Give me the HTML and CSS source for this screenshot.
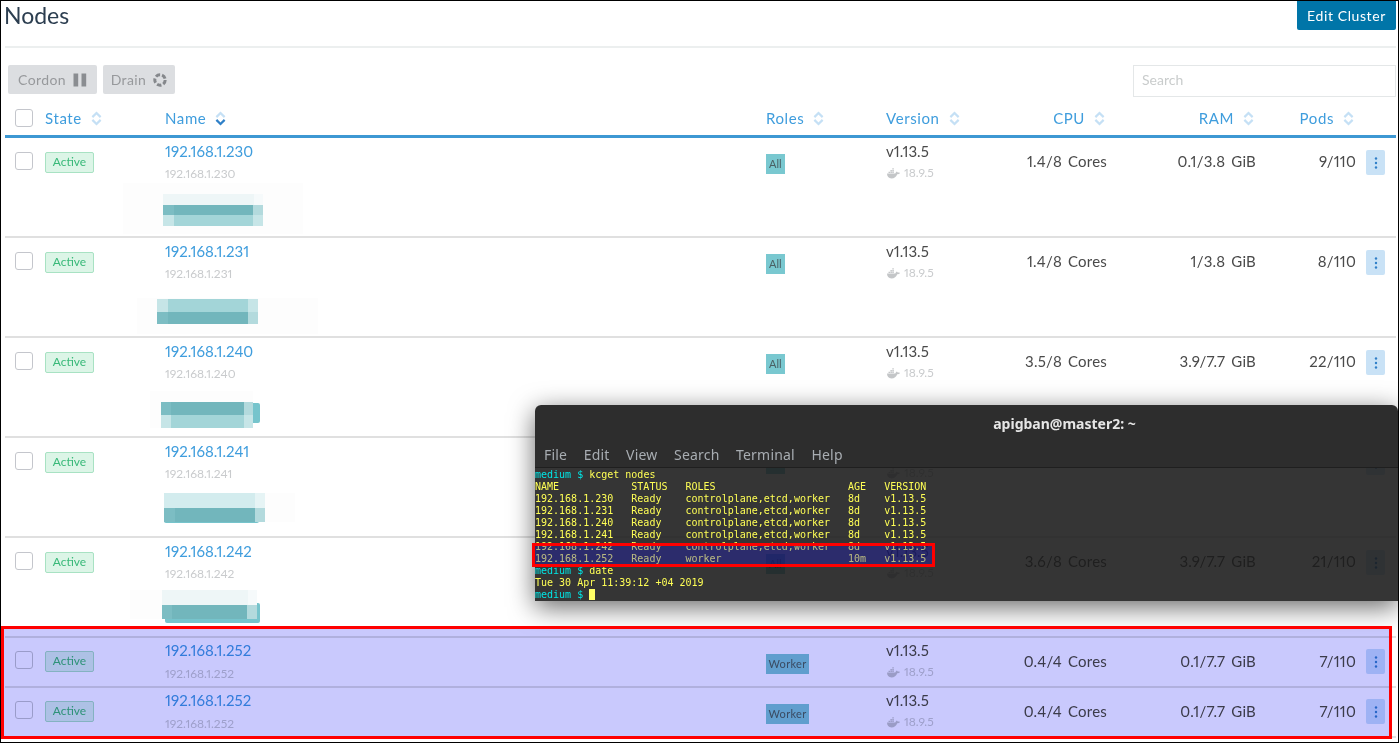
FILE: index.html
```html
<!DOCTYPE html>
<html lang="en">
<head>
<meta charset="utf-8">
<title>Nodes</title>
<link rel="stylesheet" href="styles.css">
</head>
<body>
<svg class="defs" width="0" height="0" aria-hidden="true">
  <symbol id="sort" viewBox="0 0 12 17">
    <path class="up" d="M1.500 7 6 2.500 10.500 7" fill="none" stroke-width="2.400"/>
    <path class="down" d="M1.500 10 6 14.500 10.500 10" fill="none" stroke-width="2.400"/>
  </symbol>
  <symbol id="whale" viewBox="0 0 14 11">
    <path d="M1 5.600h8.300c.3-1.100 1-1.900 1.700-2.200.2.600.5 1 1 1.200.6-.2 1.300-.1 1.900.3-.6 1-1.500 1.400-2.700 1.400C10.400 9 8.300 10.500 5.500 10.500 2.600 10.500 1 8.500 1 5.600z"/>
    <path d="M2.500 3.800h1.500v1.300H2.500zM4.400 3.800h1.500v1.300H4.400zM6.300 3.800h1.500v1.300H6.300zM4.400 2h1.500v1.400H4.400zM6.300 2h1.500v1.400H6.300zM6.300.3h1.500v1.300H6.300z"/>
  </symbol>
  <symbol id="kebab" viewBox="0 0 4 14">
    <circle cx="2" cy="2.500" r="1.200"/><circle cx="2" cy="7" r="1.200"/><circle cx="2" cy="11.500" r="1.200"/>
  </symbol>
</svg>

<div class="page">
  <header class="header">
    <h1 class="title">Nodes</h1>
    <button class="edit">Edit Cluster</button>
  </header>

  <div class="toolbar">
    <button class="action cordon">Cordon
      <svg class="ic" width="14" height="14" viewBox="0 0 14 14"><rect x="0.500" y="0.500" width="4.700" height="13"/><rect x="8.500" y="0.500" width="4.700" height="13"/></svg>
    </button>
    <button class="action drain">Drain
      <svg class="ic" width="14" height="14" viewBox="0 0 14 14"><circle class="spin" cx="7" cy="7" r="5.200"/></svg>
    </button>
    <div class="search">Search</div>
  </div>

  <div class="grid head">
    <span class="check"></span>
    <span class="th">State<svg class="sort"><use href="#sort"/></svg></span>
    <span class="th">Name<svg class="sort active"><use href="#sort"/></svg></span>
    <span class="th">Roles<svg class="sort"><use href="#sort"/></svg></span>
    <span class="th">Version<svg class="sort"><use href="#sort"/></svg></span>
    <span class="th right">CPU<svg class="sort"><use href="#sort"/></svg></span>
    <span class="th right">RAM<svg class="sort"><use href="#sort"/></svg></span>
    <span class="th right">Pods<svg class="sort"><use href="#sort"/></svg></span>
  </div>

  <div class="grid row">
    <span class="check"></span><span class="badge">Active</span>
    <div class="name"><a class="link">192.168.1.230</a><small class="sub">192.168.1.230</small></div>
    <span class="role">All</span>
    <div class="ver"><span class="v">v1.13.5</span><small class="sub"><svg class="whale"><use href="#whale"/></svg>18.9.5</small></div>
    <span class="num">1.4/8 Cores</span><span class="num">0.1/3.8 GiB</span><span class="num">9/110</span>
    <span class="more"><svg class="kebab"><use href="#kebab"/></svg></span>
    <div class="redact r1"><i class="bar b-pale"></i><i class="bar b-dark"></i><i class="bar b-mid"></i></div>
  </div>

  <div class="grid row">
    <span class="check"></span><span class="badge">Active</span>
    <div class="name"><a class="link">192.168.1.231</a><small class="sub">192.168.1.231</small></div>
    <span class="role">All</span>
    <div class="ver"><span class="v">v1.13.5</span><small class="sub"><svg class="whale"><use href="#whale"/></svg>18.9.5</small></div>
    <span class="num">1.4/8 Cores</span><span class="num">1/3.8 GiB</span><span class="num">8/110</span>
    <span class="more"><svg class="kebab"><use href="#kebab"/></svg></span>
    <div class="redact r2"><i class="bar b-mid"></i><i class="bar b-dark"></i></div>
  </div>

  <div class="grid row">
    <span class="check"></span><span class="badge">Active</span>
    <div class="name"><a class="link">192.168.1.240</a><small class="sub">192.168.1.240</small></div>
    <span class="role">All</span>
    <div class="ver"><span class="v">v1.13.5</span><small class="sub"><svg class="whale"><use href="#whale"/></svg>18.9.5</small></div>
    <span class="num">3.5/8 Cores</span><span class="num">3.9/7.7 GiB</span><span class="num">22/110</span>
    <span class="more"><svg class="kebab"><use href="#kebab"/></svg></span>
    <div class="peek p3"></div>
    <div class="redact r3"><i class="bar b-dark"></i><i class="bar b-mid"></i></div>
  </div>

  <div class="grid row">
    <span class="check"></span><span class="badge">Active</span>
    <div class="name"><a class="link">192.168.1.241</a><small class="sub">192.168.1.241</small></div>
    <span class="role">All</span>
    <div class="ver"><span class="v">v1.13.5</span><small class="sub"><svg class="whale"><use href="#whale"/></svg>18.9.5</small></div>
    <span class="num">3.6/8 Cores</span><span class="num">3.9/7.7 GiB</span><span class="num">21/110</span>
    <span class="more"><svg class="kebab"><use href="#kebab"/></svg></span>
    <div class="peek p4"></div>
    <div class="redact r4"><i class="bar b-light"></i><i class="bar b-dark"></i></div>
  </div>

  <div class="grid row">
    <span class="check"></span><span class="badge">Active</span>
    <div class="name"><a class="link">192.168.1.242</a><small class="sub">192.168.1.242</small></div>
    <span class="role">All</span>
    <div class="ver"><span class="v">v1.13.5</span><small class="sub"><svg class="whale"><use href="#whale"/></svg>18.9.5</small></div>
    <span class="num">3.6/8 Cores</span><span class="num">3.9/7.7 GiB</span><span class="num">21/110</span>
    <span class="more"><svg class="kebab"><use href="#kebab"/></svg></span>
    <div class="peek p5"></div>
    <div class="redact r5"><i class="bar b-pale"></i><i class="bar b-dark"></i></div>
  </div>

  <div class="grid row short">
    <span class="check"></span><span class="badge">Active</span>
    <div class="name"><a class="link">192.168.1.252</a><small class="sub">192.168.1.252</small></div>
    <span class="role wide">Worker</span>
    <div class="ver"><span class="v">v1.13.5</span><small class="sub"><svg class="whale"><use href="#whale"/></svg>18.9.5</small></div>
    <span class="num">0.4/4 Cores</span><span class="num">0.1/7.7 GiB</span><span class="num">7/110</span>
    <span class="more"><svg class="kebab"><use href="#kebab"/></svg></span>
  </div>

  <div class="grid row short">
    <span class="check"></span><span class="badge">Active</span>
    <div class="name"><a class="link">192.168.1.252</a><small class="sub">192.168.1.252</small></div>
    <span class="role wide">Worker</span>
    <div class="ver"><span class="v">v1.13.5</span><small class="sub"><svg class="whale"><use href="#whale"/></svg>18.9.5</small></div>
    <span class="num">0.4/4 Cores</span><span class="num">0.1/7.7 GiB</span><span class="num">7/110</span>
    <span class="more"><svg class="kebab"><use href="#kebab"/></svg></span>
  </div>

  <section class="terminal">
    <div class="term-title">apigban@master2: ~</div>
    <nav class="term-menu"><span>File</span><span>Edit</span><span>View</span><span>Search</span><span>Terminal</span><span>Help</span></nav>
    <pre class="term-body"><span class="c">medium $</span> kcget nodes
NAME            STATUS   ROLES                      AGE   VERSION
192.168.1.230   Ready    controlplane,etcd,worker   8d    v1.13.5
192.168.1.231   Ready    controlplane,etcd,worker   8d    v1.13.5
192.168.1.240   Ready    controlplane,etcd,worker   8d    v1.13.5
192.168.1.241   Ready    controlplane,etcd,worker   8d    v1.13.5
192.168.1.242   Ready    controlplane,etcd,worker   8d    v1.13.5
192.168.1.252   Ready    worker                     10m   v1.13.5
<span class="c">medium $</span> date
Tue 30 Apr 11:39:12 +04 2019
<span class="c">medium $</span> <span class="cursor"></span></pre>
    <div class="term-box"></div>
  </section>

  <div class="highlight"></div>
  <div class="highlight-box"></div>
</div>
</body>
</html>
```
FILE: styles.css
```css
* { box-sizing: border-box; }
html, body { margin: 0; padding: 0; background: #fff; }
body { font-family: "Lato", "Noto Sans", sans-serif; color: #4a4a4a; font-variant-numeric: proportional-nums; }
.defs { position: absolute; }
#sort .up { stroke: var(--up); }
#sort .down { stroke: var(--down); }

.page {
  position: relative;
  width: 1399px;
  height: 743px;
  padding: 0 2px 0 4px;
  border: 1px solid #000;
  overflow: hidden;
  background: #fff;
}

.header {
  display: flex;
  justify-content: space-between;
  align-items: flex-start;
  height: 47px;
  border-bottom: 2px solid #ecefef;
}
.title {
  margin: 0 0 0 -1px;
  font-size: 23px;
  line-height: 28px;
  font-weight: 400;
  color: #2c3e50;
}
.edit {
  width: 99px;
  height: 29px;
  padding: 0;
  border: 0;
  border-radius: 0 0 2px 2px;
  background: #0075a8;
  color: #fff;
  font: 400 14px/29px "Lato", sans-serif;
  letter-spacing: .6px;
}

.toolbar {
  display: flex;
  align-items: flex-start;
  gap: 6px;
  height: 48px;
  padding: 17px 0 0 3px;
}
.action {
  display: flex;
  align-items: center;
  justify-content: center;
  gap: 7px;
  height: 29px;
  padding: 0;
  border: 0;
  border-radius: 2px;
  background: #dcdee1;
  color: #97999c;
  font: 400 14px "Lato", sans-serif;
  letter-spacing: .4px;
}
.cordon { width: 89px; }
.drain { width: 72px; }
.ic { fill: #8a8d91; }
.spin { fill: none; stroke: #85888c; stroke-width: 3; stroke-dasharray: 4.500 2; }
.search {
  width: 263px;
  height: 32px;
  margin-left: auto;
  padding: 0 8px;
  border: 1px solid #e4e7e8;
  background: #fff;
  color: #c9cccc;
  font-size: 14px;
  line-height: 28px;
}

.grid {
  display: grid;
  grid-template-columns: 30px 120px 601px 120px 120px 101px 149px 100px 40px;
  padding-left: 10px;
}
.head {
  height: 42px;
  align-items: center;
  padding-top: 5px;
  border-bottom: 3px solid #3d98d3;
}
.th {
  display: flex;
  align-items: center;
  gap: 9px;
  color: #3f9ddd;
  font-size: 15px;
  line-height: 20px;
  letter-spacing: .6px;
}
.th.right { justify-content: flex-end; padding-right: 2px; }
.sort { width: 11px; height: 17px; --up: #c5e0f5; --down: #c5e0f5; }
.sort.active { --down: #2f80c8; }

.check {
  display: block;
  width: 18px;
  height: 18px;
  border: 1px solid #c4c6cc;
  border-radius: 3px;
  background: #fff;
}
.row {
  position: relative;
  height: 100px;
  padding-top: 14px;
  align-items: start;
  border-bottom: 2px solid #e0e0e0;
}
.row.short { height: 50px; }
.short .check, .short .badge { margin-top: -1px; }

.badge {
  display: block;
  width: 49px;
  height: 21px;
  border: 1px solid #a8e2c3;
  border-radius: 2px;
  background: #dcf5e7;
  color: #39b979;
  font-size: 12px;
  line-height: 18px;
  text-align: center;
}
.name, .ver { margin-top: -11px; }
.short .name, .short .ver { margin-top: -12px; }
.name { display: flex; flex-direction: column; align-items: flex-start; }
.link { color: #3f9ddd; font-size: 15px; line-height: 20px; }
.sub { display: flex; align-items: center; color: #c9cbcd; font-size: 12px; line-height: 16px; margin-top: 5px; }
.short .name .sub { margin-top: 6px; }
.ver { display: flex; flex-direction: column; }
.ver .sub { margin-top: 4px; }
.v { color: #4a4a4a; font-size: 15px; line-height: 20px; }
.whale { width: 14px; height: 11px; margin-right: 4px; fill: #c4c6c8; }
.role {
  justify-self: start;
  margin-top: 2px;
  padding: 0 3px;
  height: 20px;
  background: #79c8d0;
  color: #4a5f63;
  font-size: 11px;
  line-height: 19px;
}
.role.wide { width: 43px; padding: 0; text-align: center; letter-spacing: .3px; }
.num { margin-top: -1px; text-align: right; font-size: 15px; line-height: 20px; color: #4a4a4a; letter-spacing: .2px; word-spacing: 2px; }
.more {
  display: flex;
  align-items: center;
  justify-content: center;
  justify-self: start;
  width: 19px;
  height: 25px;
  margin: -2px 0 0 10px;
  border-radius: 2px;
  background: #c9e2f6;
}
.short .more { margin-top: -3px; }
.kebab { width: 4px; height: 14px; fill: #2f7fc8; }

.redact {
  position: absolute;
  display: flex;
  flex-direction: column;
}
.redact::before {
  content: "";
  position: absolute;
  background: #fdfdfd;
}
.bar { display: block; position: relative; }
.b-pale { background: linear-gradient(90deg, #eef6f7 91%, #f6fafb 91%); }
.b-light { background: linear-gradient(90deg, #d3ecee 90%, #e6f4f5 90%); }
.b-mid { background: linear-gradient(90deg, #c6e5e7 11%, #a3d5d8 11%, #a3d5d8 90%, #c6e5e7 90%); }
.b-dark { background: linear-gradient(90deg, #7cbdc3 11%, #72b6bc 11%, #72b6bc 90%, #b3dadd 90%); }
.r1 { left: 158px; top: 56px; width: 100px; height: 32px; }
.r1 .bar { height: 33.33%; }
.r1::before { left: -40px; right: -40px; top: -11px; bottom: -8px; }
.r2 { left: 152px; top: 61px; width: 101px; height: 25px; }
.r2 .bar { height: 50%; }
.r2::before { left: -20px; right: -60px; top: -1px; bottom: -10px; }
.r3 { left: 156px; top: 64px; width: 92px; height: 26px; }
.r3 .bar { height: 50%; }
.r3::before { left: -11px; right: 0; top: -11px; bottom: 0; }
.r4 { left: 159px; top: 55px; width: 101px; height: 29px; }
.r4 .bar { height: 50%; }
.r4::before { left: 0; right: -30px; top: 0; bottom: 0; }
.r5 { left: 157px; top: 52px; width: 95px; height: 29px; }
.r5 .bar { height: 50%; }
.r5::before { left: -32px; right: 0; top: 0; bottom: 0; }
.peek { position: absolute; background: #76c4cc; border-radius: 2px; }
.p3 { left: 240px; top: 65px; width: 15px; height: 20px; }
.p4 { left: 159px; top: 76px; width: 95px; height: 9px; }
.p5 { left: 160px; top: 65px; width: 95px; height: 20px; }

.highlight, .highlight-box {
  position: absolute;
  left: 0;
  top: 625px;
  width: 1391px;
  height: 113px;
}
.highlight { background: #c9c9fd; mix-blend-mode: multiply; }
.highlight-box { border: 3px solid #f00; }

.terminal {
  position: absolute;
  left: 534px;
  top: 404px;
  right: 0;
  height: 196px;
  display: flex;
  flex-direction: column;
  border-radius: 6px 6px 0 0;
  box-shadow: 0 6px 26px rgba(0, 0, 0, .6);
  color: #ffff55;
}
.term-title {
  height: 38px;
  padding: 10px 0 0 196px;
  border-radius: 6px 6px 0 0;
  background: #2d2d2d;
  color: #e6e6e6;
  font: 700 14px/18px "Noto Sans", sans-serif;
  text-align: center;
}
.term-menu {
  display: flex;
  gap: 16.500px;
  height: 24px;
  padding: 0 9px;
  background: #2d2d2d;
  color: #a8adb2;
  font: 400 14px/24px "Noto Sans", sans-serif;
  letter-spacing: .2px;
}
.term-body {
  position: relative;
  flex: 1;
  margin: 0;
  padding-top: 1px;
  border-top: 1px solid #1f1f1f;
  background: rgba(25, 25, 25, .877);
  font: 10px/12px "DejaVu Sans Mono", monospace;
  white-space: pre;
}
.c { color: #00e5e5; }
.cursor { display: inline-block; width: 6px; height: 11px; background: #ffff66; vertical-align: -2px; }
.term-box {
  position: absolute;
  left: -3px;
  top: 138px;
  width: 403px;
  height: 24px;
  border: 3px solid #f00;
  background: rgba(23, 23, 235, .3);
}
```
